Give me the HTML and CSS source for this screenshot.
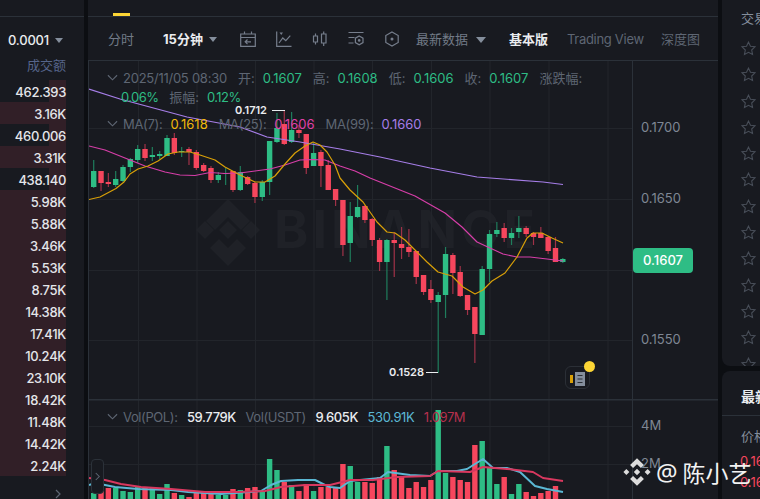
FILE: index.html
```html
<!DOCTYPE html>
<html>
<head>
    <title>POL/USDT</title>
    <meta name="viewport" content="width=device-width, initial-scale=1">
    <link rel="stylesheet" href="styles.css">
</head>
<body>
    <div class="page">
        <!-- order book, only the total column is in view -->
        <div class="book">
            <div class="book-tabs"></div>
            <div class="book-step">0.0001 <i class="caret"></i></div>
            <div class="book-title">成交额</div>
            <div class="book-rows">
                <div class="book-row"><i class="depth short"></i><span>462.393</span></div>
                <div class="book-row"><i class="depth"></i><span>3.16K</span></div>
                <div class="book-row"><i class="depth short"></i><span>460.006</span></div>
                <div class="book-row"><i class="depth"></i><span>3.31K</span></div>
                <div class="book-row"><i class="depth short"></i><span>438.140</span></div>
                <div class="book-row"><i class="depth"></i><span>5.98K</span></div>
                <div class="book-row"><i class="depth"></i><span>5.88K</span></div>
                <div class="book-row"><i class="depth"></i><span>3.46K</span></div>
                <div class="book-row"><i class="depth"></i><span>5.53K</span></div>
                <div class="book-row"><i class="depth"></i><span>8.75K</span></div>
                <div class="book-row"><i class="depth"></i><span>14.38K</span></div>
                <div class="book-row"><i class="depth"></i><span>17.41K</span></div>
                <div class="book-row"><i class="depth"></i><span>10.24K</span></div>
                <div class="book-row"><i class="depth"></i><span>23.10K</span></div>
                <div class="book-row"><i class="depth"></i><span>18.42K</span></div>
                <div class="book-row"><i class="depth"></i><span>11.48K</span></div>
                <div class="book-row"><i class="depth"></i><span>14.42K</span></div>
                <div class="book-row"><i class="depth"></i><span>2.24K</span></div>
            </div>
            <svg class="book-more" viewBox="0 0 8 10"><path d="M2 1l4 4-4 4"/></svg>
        </div>

        <div class="main">
            <div class="top-tabs"><i class="tab-mark"></i></div>
            <div class="toolbar">
                <span class="tool tool-time">分时</span>
                <span class="tool tool-active tool-interval">15分钟 <i class="caret"></i></span>
                <svg class="icon" viewBox="0 0 16 16"><path d="M.7 3h14.600v12.300H.7zM.7 6.500h14.600M4.500 .5V3M11.500 .5V3M11 10.800H5M7.500 8.500L5.200 10.800 7.500 13.100"/></svg>
                <svg class="icon" viewBox="0 0 16 16"><path d="M.7 .5v14.800h14.800M3 12l3.800-5 3 2.700 4.500-5"/><path class="solid" d="M3.500 1.500h3.500l-1.750 2.500z"/></svg>
                <svg class="icon" viewBox="0 0 16 16"><path d="M1.500 5h4v6h-4zM9.500 3h4.500v9h-4.500zM3.500 2.500V5M3.500 11v2.500M11.700 .5V3M11.700 12v3"/></svg>
                <svg class="icon" viewBox="0 0 16 16"><path d="M.5 1.500h15M.5 6.500h6M.5 12h5M11.200 5l3.800 2.200v4.400l-3.800 2.200-3.800-2.200V7.200z"/><circle class="solid" cx="11.200" cy="9.400" r="1.300"/></svg>
                <svg class="icon" viewBox="0 0 16 16"><path d="M8 1l6.200 3.500v7L8 15l-6.200-3.500v-7z"/><circle class="solid" cx="8" cy="8" r="1.500"/></svg>
                <span class="tool tool-data">最新数据 <i class="caret caret-big"></i></span>
                <span class="tool tool-active tool-basic">基本版</span>
                <span class="tool tool-dim tool-tv">Trading View</span>
                <span class="tool tool-dim tool-depth">深度图</span>
            </div>

            <div class="chart">
                <svg id="chartSvg" class="chart-svg" viewBox="88 61 630 438"></svg>

                <div class="legend legend-price">
                    <svg class="fold" viewBox="0 0 12 8"><path d="M1 1l5 5 5-5"/></svg>
                    <span class="lbl date">2025/11/05 08:30</span>
                    <span class="lbl">开:</span><span class="up">0.1607</span>
                    <span class="lbl">高:</span><span class="up">0.1608</span>
                    <span class="lbl">低:</span><span class="up">0.1606</span>
                    <span class="lbl">收:</span><span class="up">0.1607</span>
                    <span class="lbl">涨跌幅:</span>
                </div>
                <div class="legend legend-wrap">
                    <span class="up pct">0.06%</span>
                    <span class="lbl">振幅:</span><span class="up pct">0.12%</span>
                </div>
                <div class="legend legend-ma">
                    <svg class="fold" viewBox="0 0 12 8"><path d="M1 1l5 5 5-5"/></svg>
                    <span class="lbl">MA(7):</span><span class="ma7">0.1618</span>
                    <span class="lbl">MA(25):</span><span class="ma25">0.1606</span>
                    <span class="lbl">MA(99):</span><span class="ma99">0.1660</span>
                </div>
                <div class="legend legend-vol">
                    <svg class="fold" viewBox="0 0 12 8"><path d="M1 1l5 5 5-5"/></svg>
                    <span class="lbl-vol">Vol(POL):</span><span class="vol-val">59.779K</span>
                    <span class="lbl-vol">Vol(USDT)</span><span class="vol-val">9.605K</span>
                    <span class="vol-ma1">530.91K</span><span class="vol-ma2">1.097M</span>
                </div>

                <div class="last-price">0.1607</div>

                <div class="news">
                    <i class="news-tab"></i>
                    <svg class="news-doc" viewBox="0 0 10 14"><path d="M0 0h10v14H0z"/><path class="news-lines" d="M2.500 3.500h5M2.500 7h5M2.500 10.500h5"/></svg>
                    <i class="news-dot"></i>
                </div>

                <div class="handle"><svg viewBox="0 0 8 10"><path d="M2 1l4 4-4 4"/></svg></div>
            </div>
        </div>

        <div class="side">
            <div class="side-top">
                <div class="side-title">交易对</div>
                <div class="stars" id="stars"></div>
            </div>
            <div class="side-bottom">
                <div class="side-head">最新成交</div>
                <div class="side-col">价格(USDT)</div>
                <div class="side-price">0.1607</div>
                <div class="side-price">0.1607</div>
            </div>
        </div>
    </div>

    <div class="stamp">
        <svg class="stamp-logo" viewBox="0 0 32 32"><path d="M16 1l6.500 6.500-2.800 2.800L16 6.600l-3.700 3.700-2.800-2.800zM6 11.200L8.800 14 6 16.800 3.200 14zM26 11.200l2.800 2.800-2.800 2.800-2.800-2.800zM16 11l3 3-3 3-3-3zM9.500 20.500l2.800-2.800 3.700 3.700 3.700-3.700 2.800 2.800L16 27z" transform="translate(0 2)"/></svg>
        <span class="stamp-at">@</span>
        <span class="stamp-name">陈小艺</span>
    </div>

    <script src="chart.js"></script>
</body>
</html>
```

FILE: styles.css
```css
* { box-sizing: border-box; }
html, body { margin: 0; height: 100%; }
body { background-color: #0c0e12; font-family: Inter, "Noto Sans CJK SC", sans-serif; font-size: 13px; color: #eaecef; overflow: hidden; position: relative; }
i { display: block; font-style: normal; }

.page { display: flex; gap: 4px; height: 499px; width: 760px; }

.caret { display: inline-block; width: 0; height: 0; border-left: 4px solid transparent; border-right: 4px solid transparent; border-top: 5px solid #848e9c; margin-left: 3px; vertical-align: 2px; }
.caret-big { border-left-width: 5px; border-right-width: 5px; border-top-width: 6px; margin-left: 4px; vertical-align: 1px; }

/* order book */
.book { width: 84px; flex: none; background-color: #181a20; display: flex; flex-direction: column; overflow: hidden; }
.book-tabs { height: 17px; border-bottom: 1px solid #2b3139; flex: none; }
.book-step { height: 46px; padding: 15px 0 0 8px; font-weight: 500; line-height: 16px; letter-spacing: -0.2px; }
.book-title { width: 66px; text-align: right; color: #56658b; line-height: 16px; height: 17px; margin-top: -5px; }
.book-rows { margin-top: 6px; flex: none; }
.book-row { position: relative; width: 66px; height: 22px; line-height: 24px; text-align: right; font-weight: 500; font-size: 13px; color: #e4e6ea; letter-spacing: -0.3px; }
.book-row span { position: relative; }
.depth { position: absolute; top: 0; right: 0; bottom: 0; left: 0; background-color: #311f27; }
.depth.short { left: 49px; }
.book-more { width: 8px; height: 10px; margin: 13px 0 0 54px; flex: none; }
.book-more path { fill: none; stroke: #5e6673; stroke-width: 1.200; }

/* chart column */
.main { width: 630px; flex: none; background-color: #181a20; display: flex; flex-direction: column; }
.top-tabs { height: 17px; border-bottom: 1px solid #2b3139; flex: none; padding: 13px 0 0 25px; }
.tab-mark { width: 17px; height: 3px; background-color: #fcd535; }

.toolbar { height: 44px; flex: none; display: flex; align-items: center; border-bottom: 1px solid #2b3139; padding-left: 20px; }
.tool { color: #727a87; line-height: 20px; white-space: nowrap; }
.tool-active { color: #eaecef; font-weight: 700; }
.tool-dim { color: #5e6673; }
.tool-time { width: 55px; }
.tool-interval { width: 77px; }
.tool-data { margin-left: -4px; width: 93px; }
.tool-basic { width: 58px; }
.tool-tv { width: 94px; letter-spacing: -0.3px; }
.icon { width: 16px; height: 16px; margin-right: 20px; flex: none; }
.icon path { fill: none; stroke: #767e8c; stroke-width: 1.200; }
.icon .solid { fill: #767e8c; stroke: none; }

/* chart area */
.chart { position: relative; flex: 1; overflow: hidden; border-left: 1px solid #2b3139; }
.chart-svg { position: absolute; top: 0; left: -1px; width: 630px; height: 438px; display: block; }
.legend { position: absolute; display: flex; align-items: center; white-space: nowrap; line-height: 18px; gap: 6px; }
.legend-price { left: 18px; top: 8px; }
.legend-wrap { left: 30px; top: 27px; }
.legend-ma { left: 18px; top: 54px; }
.legend-vol { left: 18px; top: 347px; gap: 9.500px; letter-spacing: -0.4px; }
.fold { width: 11px; height: 8px; margin-right: -6px; flex: none; }
.legend-vol .fold { margin-right: -4.500px; }
.fold path { fill: none; stroke: #5e6673; stroke-width: 1.200; }
.lbl { color: #5e6673; margin-left: 5px; }
.date { letter-spacing: -0.25px; }
.pct { letter-spacing: -0.6px; }
.legend-ma .lbl { letter-spacing: -0.3px; }
.up { color: #2ebd85; margin-left: 2px; }
.ma7 { color: #f0b90b; margin-left: 2px; }
.ma25 { color: #e040a8; margin-left: 2px; }
.ma99 { color: #a67ee8; margin-left: 2px; }
.lbl-vol { color: #5e6673; }
.vol-val { color: #eaecef; font-weight: 500; }
.vol-ma1 { color: #5bb8d4; }
.vol-ma2 { color: #b5304d; }

.last-price { position: absolute; left: 544px; top: 187px; width: 60px; height: 25px; background-color: #2ebd85; border-radius: 4px; color: #fff; text-align: center; line-height: 25px; font-weight: 500; }

.news { position: absolute; left: 476px; top: 305px; width: 25px; height: 23px; border: 1px solid #2b2f36; border-radius: 6px; }
.news-tab { position: absolute; left: 4px; top: 8px; width: 3px; height: 8px; background-color: #d9a008; }
.news-doc { position: absolute; left: 9px; top: 5px; width: 10px; height: 14px; }
.news-doc path { fill: #848e9c; }
.news-doc .news-lines { fill: none; stroke: #2b2f36; stroke-width: 1; }
.news-dot { position: absolute; left: 18px; top: -6px; width: 11px; height: 11px; border-radius: 50%; background-color: #fcd535; }

.handle { position: absolute; left: 2px; top: 398px; width: 13px; height: 35px; background-color: #181a20; border: 1px solid #2b3139; border-radius: 4px; display: flex; align-items: center; justify-content: center; }
.handle svg { width: 7px; height: 9px; }
.handle path { fill: none; stroke: #5e6673; stroke-width: 1.200; }

/* right column */
.side { flex: 1; display: flex; flex-direction: column; gap: 5px; overflow: hidden; }
.side-top { height: 366px; flex: none; background-color: #181a20; border-radius: 0 0 0 8px; overflow: hidden; padding: 9px 0 0 19px; }
.side-title { color: #848e9c; line-height: 18px; white-space: nowrap; }
.stars { margin-top: 8px; display: flex; flex-direction: column; }
.star { width: 15px; height: 15px; margin: 6px 0 5.300px 0; flex: none; }
.star path { fill: none; stroke: #474d57; stroke-width: 1.200; }
.side-bottom { flex: 1; background-color: #181a20; border-radius: 8px 0 0 0; overflow: hidden; white-space: nowrap; }
.side-head { height: 45px; padding: 16px 0 0 19px; border-bottom: 1px solid #2b3139; font-weight: 700; font-size: 14px; line-height: 20px; }
.side-col { color: #848e9c; padding-left: 19px; margin-top: 11px; line-height: 18px; }
.side-price { color: #f6465d; padding-left: 18px; line-height: 21px; }
.side-col + .side-price { margin-top: 6px; }

/* repost stamp across the corner */
.stamp { position: absolute; left: 620px; top: 457px; display: flex; align-items: center; gap: 5px; color: #f2f2f2; height: 30px; }
.stamp-logo { width: 34px; height: 34px; margin-right: -3px; flex: none; }
.stamp-logo path { fill: #dcdcdc; }
.stamp-at { font-size: 24px; line-height: 30px; font-family: "Noto Sans", sans-serif; }
.stamp-name { font-size: 23px; line-height: 30px; font-family: "Noto Sans CJK SC", sans-serif; }
```

FILE: chart.js
```js
// candles: body top, body bottom, wick top, wick bottom, g or r (all in page pixels)
const candles = [
    [171,187,160,188,'g'],[171,183,171,191,'r'],[182,184,173,187,'r'],[179,185,171,187,'g'],
    [167,181,165,182,'g'],[159,167,158,172,'g'],[149,160,145,163,'g'],[149,158,144,161,'r'],
    [155,157,147,161,'g'],[154,156,151,159,'g'],[138,156,135,156,'g'],[138,153,133,155,'r'],
    [151,152,147,157,'g'],[149,152,147,165,'r'],[152,168,150,170,'r'],[165,171,163,172,'r'],
    [168,180,166,183,'r'],[175,180,172,183,'g'],[173,174,168,185,'g'],[171,190,171,192,'r'],
    [172,190,166,191,'g'],[177,184,176,185,'r'],[183,197,182,203,'r'],[182,197,180,201,'g'],
    [141,182,141,195,'g'],[128,142,113,143,'g'],[124,144,111,145,'r'],[130,142,112,143,'g'],
    [130,133,125,138,'r'],[134,168,134,174,'r'],[153,166,143,166,'g'],[152,166,150,187,'r'],
    [165,190,160,190,'r'],[189,200,189,206,'r'],[200,245,200,256,'r'],[216,243,202,262,'g'],
    [207,217,185,218,'g'],[206,220,205,223,'r'],[219,240,218,246,'r'],[240,262,238,271,'r'],
    [240,262,239,300,'g'],[240,243,232,277,'r'],[244,248,227,259,'r'],[247,252,229,257,'r'],
    [251,277,251,284,'r'],[275,292,275,295,'r'],[289,300,280,303,'r'],[295,302,292,373,'g'],
    [254,295,247,318,'g'],[255,273,253,294,'r'],[272,296,266,297,'r'],[295,310,295,315,'r'],
    [307,334,307,363,'r'],[269,335,266,335,'g'],[234,269,230,282,'g'],[230,234,222,237,'g'],
    [228,238,223,242,'r'],[233,238,228,245,'g'],[228,232,216,238,'g'],[228,234,226,237,'r'],
    [233,237,232,245,'r'],[233,238,227,238,'r'],[237,251,236,254,'r'],[248,262,237,262,'r'],
    [259,262,258,263,'g']
];

// top of each volume bar, the bars run off the bottom of the page
const volumes = [493,491,488,488,491,492,487,487,488,494,484,493,495,497,492,493,493,495,495,489,
    490,488,487,492,459,470,482,485,491,484,491,487,487,487,464,466,482,482,483,477,
    446,470,476,488,482,487,480,410,473,477,480,482,445,441,467,484,477,494,484,492,496,493,491,486,499];

const ma7 = '89,199.500 100,197 116,188.500 124,182 130,174 138,169 148,166 158,161 168,154 178,152 190,152 200,155 215,160 225,167 240,175 255,182 265,182 275,176 285,164 295,153 305,146 313,142 320,145 327,152 335,165 340,178 350,190 363,202 377,222 387,232 395,233 405,240 415,250 427,262 438,272 452,276 463,287 475,294 483,290 492,281 505,273 517,257 527,238 533,233 542,233 552,238 563,243';
const ma25 = '89,146 105,150 125,158 145,166 165,172 180,175 195,175.500 210,172.500 225,173.500 240,173 255,171 270,169 285,165 300,160 313,159.500 325,160 340,166 355,171 370,178 380,182 400,190 415,196 445,213 462,227 477,242 490,248 503,254 517,257 530,257 547,259 563,261';
const ma99 = '89,89 120,99 187,117 240,127 267,137 300,142 340,149 380,157 430,168 477,177 543,182 563,184.500';
const volCyan = '89,485 95,483 115,487 138,489 171,490 188,492 221,494 235,493 261,491 271,485 281,481 298,480 315,480 325,485 330,487 340,488 350,481 380,478 388,472 410,475 430,476 438,471 457,471 467,469 483,459 493,468 507,468 520,472 535,486 547,489 563,492';
const volRed = '89,478 105,480 121,484 141,487 171,489 205,492 238,492 265,491 281,487 305,485 330,485 350,480 373,480 397,477 430,476 438,471 470,472 483,467 507,469 533,472 543,478 563,481';

const colors = { g: '#2ebd85', r: '#f6465d' };
const wicks = { g: '#1f7d5c', r: '#a03248' };
const svg = document.getElementById('chartSvg');
let out = '';

function rect(x, y, w, h, fill) {
    return `<rect x="${x}" y="${y}" width="${w}" height="${h}" fill="${fill}"/>`;
}

function line(pts, color, width) {
    return `<polyline points="${pts}" fill="none" stroke="${color}" stroke-width="${width}" stroke-linejoin="round"/>`;
}

function text(x, y, str) {
    return `<text x="${x}" y="${y}" font-family="Inter, sans-serif" font-size="13" fill="#7f8794">${str}</text>`;
}

// watermark
out += `<path fill="#1f2127" d="M228 199l22 22-9 9-13-13-13 13-9-9zM205 221l9 9-9 9-9-9zM251 221l9 9-9 9-9-9zM228 221l9 9-9 9-9-9zM219 239l9 9 9-9 9 9-18 18-18-18 9-9z"/>`;
out += `<text x="274" y="248" font-family="Inter, sans-serif" font-weight="700" font-size="52" letter-spacing="4" fill="#1f2127">BINANCE</text>`;

// grid
[138, 196.500, 255, 313.500, 372, 431, 489.500, 548.500, 607.500].forEach(x => {
    out += rect(x, 61, 1, 438, '#22252b');
});
[128, 199, 270, 340, 426, 464].forEach(y => {
    out += rect(89, y, 543, 1, '#22252b');
});
out += rect(89, 399, 630, 1.500, '#2b3139');
out += rect(632, 61, 1, 438, '#2b3139');

// volume bars
volumes.forEach((top, i) => {
    const x = 93.700 + i * 7.330;
    out += rect(x - 2.700, top, 5.400, 499 - top, colors[candles[i][4]]);
});
out += line(volCyan, '#5bb8d4', 2);
out += line(volRed, '#d9385f', 2);

// candles
candles.forEach((c, i) => {
    const x = 93.700 + i * 7.330;
    out += rect(x - 0.600, c[2], 1.200, c[3] - c[2], wicks[c[4]]);
    out += rect(x - 2.700, c[0], 5.400, c[1] - c[0], colors[c[4]]);
});
out += line(ma99, '#a67ee8', 1.200);
out += line(ma25, '#d63ea8', 1.200);
out += line(ma7, '#d9a008', 1.200);

// high and low marks
out += rect(272, 110, 13, 1, '#eaecef');
out += `<text x="235" y="114" font-family="Inter, sans-serif" font-size="11" font-weight="600" fill="#eaecef">0.1712</text>`;
out += rect(426, 372, 12, 1, '#eaecef');
out += `<text x="389" y="376" font-family="Inter, sans-serif" font-size="11" font-weight="600" fill="#eaecef">0.1528</text>`;

// axis labels
out += text(641, 132, '0.1700');
out += text(641, 203, '0.1650');
out += text(641, 344, '0.1550');
out += text(641, 430, '4M');
out += text(641, 468, '2M');

svg.innerHTML = out;

// favourite stars in the right column
const stars = document.getElementById('stars');
for (let i = 0; i < 13; i++) {
    stars.innerHTML += '<svg class="star" viewBox="0 0 16 16"><path d="M8 1.200l2.100 4.400 4.800.6-3.500 3.400.9 4.800L8 12.100l-4.300 2.300.9-4.800L1.100 6.200l4.800-.6z"/></svg>';
}
```
